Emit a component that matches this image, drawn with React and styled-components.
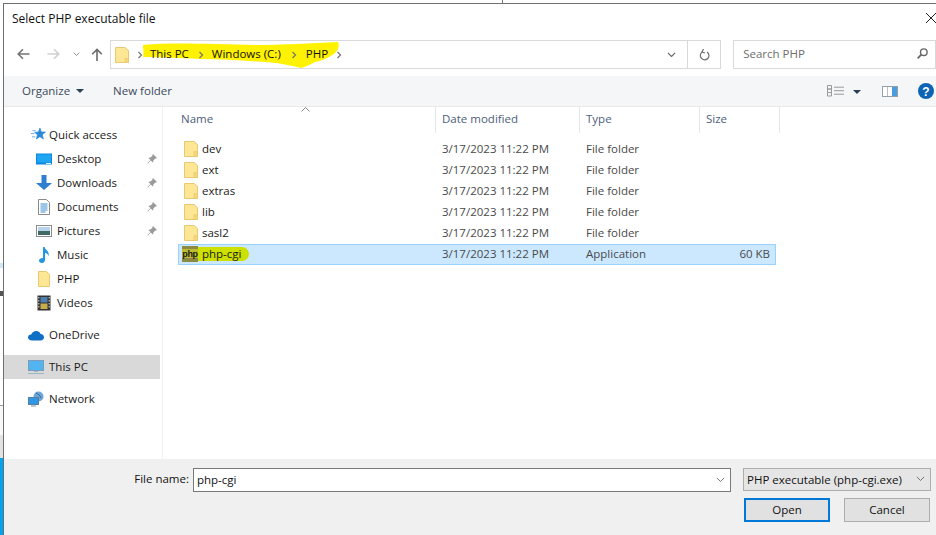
import React from "react";
import styled, { createGlobalStyle } from "styled-components";

const GlobalStyle = createGlobalStyle`
  html, body { margin: 0; padding: 0; background: #fff; }
  body { font-family: "Open Sans", "Noto Sans", sans-serif; font-size: 11.5px; color: #1a1a1a; }
  * { box-sizing: border-box; }
`;

const Page = styled.div`
  width: 936px;
  height: 535px;
  display: flex;
  position: relative;
  overflow: hidden;
  background: #fff;
`;

const OutsideStrip = styled.div`
  width: 3px;
  display: flex;
  flex-direction: column;
`;

const StripBand = styled.div`
  height: ${(p) => p.$h}px;
  flex: none;
  background: ${(p) => p.$c};
`;

const BehindTick = styled.div`
  position: absolute;
  left: 502px;
  top: 0;
  width: 1px;
  height: 3px;
  background: #777;
`;

const Dialog = styled.div`
  flex: 1;
  display: flex;
  flex-direction: column;
  margin-top: 3px;
  border-top: 1px solid #6f6f6f;
  border-left: 1px solid #6f6f6f;
  min-width: 0;
`;

const TitleBar = styled.div`
  height: 28px;
  display: flex;
  align-items: center;
  justify-content: space-between;
  padding: 0 0 0 8px;
  font-size: 12px;
  color: #111;
`;

const CloseIcon = styled.svg`
  width: 10px;
  height: 10px;
`;

const NavBar = styled.div`
  height: 44px;
  display: flex;
  align-items: flex-start;
  padding-top: 8px;
`;

const NavButtons = styled.div`
  width: 106px;
  height: 28px;
  display: flex;
  align-items: center;
  padding-left: 13px;
`;

const NavSlot = styled.span`
  display: inline-flex;
  align-items: center;
  margin-left: ${(p) => p.$ml || 0}px;
`;

const AddressBar = styled.div`
  width: 612px;
  height: 29px;
  display: flex;
  align-items: center;
  border: 1px solid #d9d9d9;
`;

const Crumbs = styled.div`
  flex: 1;
  display: flex;
  align-items: center;
  height: 100%;
  padding: 0 0 2px 4px;
  position: relative;
`;

const Highlight = styled.svg`
  position: absolute;
  left: 0;
  top: 0;
  pointer-events: none;
`;

const Crumb = styled.span`
  position: relative;
  color: #111;
  margin-left: ${(p) => p.$gap}px;
`;

const CrumbArrow = styled.svg`
  position: relative;
  width: 6px;
  height: 8px;
  margin-left: ${(p) => p.$gap}px;
  margin-top: 2px;
`;

const AddressButton = styled.div`
  width: ${(p) => p.$w}px;
  height: 100%;
  display: flex;
  align-items: center;
  justify-content: center;
  border-left: ${(p) => (p.$divided ? "1px solid #d9d9d9" : "none")};
`;

const SearchBox = styled.div`
  width: 203px;
  height: 29px;
  margin-left: 12px;
  display: flex;
  align-items: center;
  justify-content: space-between;
  padding: 0 7px 2px 9px;
  border: 1px solid #d9d9d9;
  color: #6d6d6d;
`;

const Toolbar = styled.div`
  height: 31px;
  display: flex;
  align-items: center;
  background: #f5f6f7;
  border-bottom: 1px solid #e9e9e9;
  padding: 0 0 2px 18px;
  color: #3b4a5c;
`;

const ToolButton = styled.span`
  display: inline-flex;
  align-items: center;
  gap: 6px;
  margin-right: ${(p) => p.$mr || 0}px;
`;

const Caret = styled.span`
  width: 0;
  height: 0;
  margin: ${(p) => p.$margin || "1px 0 0 0"};
  border-left: 4px solid transparent;
  border-right: 4px solid transparent;
  border-top: 4px solid #2c3e56;
`;

const ToolRight = styled.div`
  margin-left: auto;
  display: flex;
  align-items: center;
  padding: 2px 2px 0 0;
`;

const Body = styled.div`
  flex: 1;
  display: flex;
  min-height: 0;
`;

const Sidebar = styled.div`
  width: 159px;
  border-right: 1px solid #f1f1f1;
  padding-top: 16px;
`;

const NavRow = styled.div`
  height: 24px;
  width: 156px;
  display: flex;
  align-items: center;
  position: relative;
  padding-left: ${(p) => (p.$sub ? 32 : 24)}px;
  padding-bottom: 1px;
  margin-top: ${(p) => p.$mt || 0}px;
  background: ${(p) => (p.$active ? "#d9d9d9" : "transparent")};
`;

const NavIcon = styled.svg`
  width: 16px;
  height: 16px;
  flex: none;
  margin-right: 5px;
`;

const StarIcon = styled.svg`
  width: 15px;
  height: 15px;
  flex: none;
  margin: 0 3px 0 3px;
`;

const Pin = styled.svg`
  position: absolute;
  right: 3px;
  top: 7px;
  width: 10px;
  height: 10px;
`;

const FilePane = styled.div`
  flex: 1;
  padding-left: 15px;
  min-width: 0;
`;

const HeaderRow = styled.div`
  display: grid;
  grid-template-columns: 258px 144px 120px 80px;
  height: 26px;
  position: relative;
  color: #4c607a;
`;

const HeaderCell = styled.div`
  border-right: 1px solid #e5e5e5;
  padding: 0 0 3px ${(p) => (p.$first ? 3 : 6)}px;
  display: flex;
  align-items: center;
`;

const SortArrow = styled.svg`
  position: absolute;
  left: 123px;
  top: 0;
  width: 9px;
  height: 5px;
`;

const FileList = styled.div`
  padding-top: 6px;
`;

const FileRow = styled.div`
  display: grid;
  grid-template-columns: 258px 144px 120px 76px;
  width: 598px;
  height: 21px;
  align-items: center;
  position: relative;
  color: #4a4a4a;
  padding-bottom: 1px;
  background: ${(p) => (p.$selected ? "#cce8ff" : "transparent")};
  box-shadow: ${(p) => (p.$selected ? "inset 0 0 0 1px #99d1ff" : "none")};
`;

const NameCell = styled.div`
  display: flex;
  align-items: center;
  padding-left: 6px;
  gap: 4px;
  color: #1a1a1a;
  position: relative;
`;

const DataCell = styled.div`
  padding: 0 0 2px 6px;
`;

const SizeCell = styled.div`
  text-align: right;
  padding: 0 6px 2px 0;
`;

const RowHighlight = styled.div`
  position: absolute;
  left: 18px;
  top: 1px;
  width: 53px;
  height: 14px;
  background: #cde000;
  border-radius: 2px 7px 7px 2px;
`;

const PhpIcon = styled.div`
  position: relative;
  width: 16px;
  height: 16px;
  margin-left: -2px;
  background: linear-gradient(#8c8a45 0 3px, #bdbb2e 3px 12px, #8c8a45 12px);
  color: #1c1c1c;
  font-size: 9px;
  line-height: 17px;
  letter-spacing: -0.4px;
  text-align: center;
  font-family: "Liberation Sans", sans-serif;
  font-weight: 700;
`;

const FileLabel = styled.span`
  position: relative;
  padding-bottom: 2px;
`;

const Footer = styled.div`
  height: 76px;
  background: #f0f0f0;
  display: grid;
  grid-template-columns: 189px 538px 12px 188px;
  grid-template-rows: 24px 24px;
  row-gap: 6px;
  padding-top: 9px;
`;

const FieldLabel = styled.div`
  text-align: right;
  padding-right: 4px;
  line-height: 22px;
  color: #111;
`;

const FileInput = styled.div`
  background: #fff;
  border: 1px solid #7a7a7a;
  display: flex;
  align-items: center;
  justify-content: space-between;
  padding: 0 5px 1px 3px;
  color: #111;
`;

const Filter = styled.div`
  grid-column: 4;
  height: 23px;
  background: #e5e5e5;
  border: 1px solid #adadad;
  display: flex;
  align-items: center;
  justify-content: space-between;
  padding: 0 5px 1px 3px;
  color: #111;
  white-space: nowrap;
`;

const Buttons = styled.div`
  grid-column: 1 / -1;
  display: flex;
  justify-content: flex-end;
  gap: 14px;
  padding-right: 1px;
`;

const DialogButton = styled.div`
  width: 86px;
  height: 24px;
  display: flex;
  align-items: center;
  justify-content: center;
  padding-bottom: 1px;
  background: #e1e1e1;
  color: #111;
  border: ${(p) => (p.$primary ? "2px solid #0078d7" : "1px solid #adadad")};
`;

const Chevron = ({ size = 9, color = "#5a5a5a", sw = 1 }) => (
  <svg width={size} height={size * 0.6} viewBox="0 0 10 6" fill="none" stroke={color} strokeWidth={sw}>
    <path d="M1 1l4 4 4-4" />
  </svg>
);

const Arrow = ({ gap }) => (
  <CrumbArrow $gap={gap} viewBox="0 0 6 8" fill="none" stroke="#777" strokeWidth="1.3">
    <path d="M1.5 1l3 3-3 3" />
  </CrumbArrow>
);

const FolderIcon = () => (
  <svg width="14" height="16" viewBox="0 0 14 16" style={{ flex: "none" }}>
    <path d="M.5.5h9.5l3.5 3v12H.5z" fill="#fde694" stroke="#e8c873" />
    <path d="M10 10.5h3.5v5H10z" fill="#f5d679" stroke="#e8c873" strokeWidth=".6" />
  </svg>
);

const navIcons = {
  star: (
    <path d="M9.500 1l1.500 4.200 4.500.2-3.500 2.800 1.200 4.600-3.700-2.500-3.800 2.500 1.200-4.600-3-2.400L7.900 5.300zM0 7h3.500M1 10.500h3.500M1.500 4H5" fill="#2d89d8" stroke="#2d89d8" strokeWidth=".7" />
  ),
  desktop: (
    <>
      <rect x="0" y="2.500" width="16" height="11" fill="#0f87de" />
      <rect x="1" y="3.500" width="14" height="8" fill="#1fa6f2" />
      <path d="M10 12.500h5" stroke="#e8f4fc" />
    </>
  ),
  downloads: <path d="M5.500 0h5v8H16l-8 7-8-7h5.500z" fill="#2f7fd1" />,
  documents: (
    <>
      <path d="M2.500.5h8l3 3v12h-11z" fill="#fff" stroke="#8a8a8a" />
      <path d="M4.500 5h7M4.500 7h7M4.500 9h7M4.500 11h7M4.500 13h5" stroke="#3d8ccf" />
    </>
  ),
  pictures: (
    <>
      <rect x=".5" y="2.500" width="15" height="11" fill="#fff" stroke="#8c8c8c" />
      <rect x="2" y="4" width="12" height="4" fill="#b9d3ea" />
      <rect x="2" y="8" width="12" height="4" fill="#3f6b64" />
    </>
  ),
  music: (
    <path d="M7 0h1.600c.3 3 5.400 3.600 3.800 9.500C12.400 7.300 10.500 6 9 5.700V13c0 1.700-1.500 3-3.200 3S3 15 3 13.500 4.500 11 7 11z" fill="#2496e0" />
  ),
  videos: (
    <>
      <rect x="1.500" y="0.500" width="13" height="15" fill="#333" />
      <rect x="4.500" y="2" width="7" height="5.500" fill="#4f7fb0" />
      <rect x="4.500" y="8.500" width="7" height="5.500" fill="#c9ad4a" />
      <path d="M2.800 2v12M13.200 2v12" stroke="#ddd" strokeDasharray="1.500 1.500" />
    </>
  ),
  cloud: (
    <path d="M4 13.500C1.500 13.500 0 12 0 10.500 0 8.800 1.400 7.500 3.200 7.600 4 5.200 6 4 8.300 4c2 0 3.600 1 4.300 3 2 0 3.400 1.400 3.400 3.200 0 1.900-1.400 3.300-3.300 3.300z" fill="#0f6fc4" />
  ),
  monitor: (
    <>
      <rect x=".5" y="1.500" width="15" height="10" fill="#53b4f2" stroke="#7b9db8" />
      <path d="M6 12.500h4" stroke="#9db4c6" />
      <path d="M0 14.500h16" stroke="#9db4c6" />
    </>
  ),
  network: (
    <>
      <circle cx="10.500" cy="5.500" r="5" fill="#6fa6d6" />
      <path d="M8 2c2 1 4 2 5 5" stroke="#2c6aa6" fill="none" />
      <rect x=".5" y="6.500" width="10" height="7" fill="#2f97e6" stroke="#5a7d9a" />
      <path d="M3 15h5" stroke="#7d97ab" />
    </>
  ),
  folder: <path d="M2.500.5h8l3 3v12h-11z" fill="#fde694" stroke="#e8c873" />,
};

const stripBands = [
  [263, "#fff"],
  [5, "#cfe8f5"],
  [23, "#fff"],
  [5, "#555"],
  [109, "#fff"],
  [1, "#9a9a9a"],
  [29, "#f8f8f8"],
  [23, "#e2e2e2"],
  [77, "#00a3ee"],
];

const quickLinks = [
  { label: "Desktop", icon: "desktop", pinned: true },
  { label: "Downloads", icon: "downloads", pinned: true },
  { label: "Documents", icon: "documents", pinned: true },
  { label: "Pictures", icon: "pictures", pinned: true },
  { label: "Music", icon: "music" },
  { label: "PHP", icon: "folder" },
  { label: "Videos", icon: "videos" },
];

const folders = ["dev", "ext", "extras", "lib", "sasl2"];

const PinIcon = () => (
  <Pin viewBox="0 0 10 10">
    <path d="M6 0l4 4-1 .6-.6-.2L6.300 6.500c.2.800 0 1.500-.6 2L3.800 6.400 1 9.400l-.5-.5 3-2.800L1.500 4.200c.5-.6 1.200-.8 2-.6l2.100-2.100-.2-.6z" fill="#9a9a9a" />
  </Pin>
);

export default function App() {
  return (
    <Page>
      <GlobalStyle />
      <BehindTick />
      <OutsideStrip>
        {stripBands.map(([h, c], i) => (
          <StripBand key={i} $h={h} $c={c} />
        ))}
      </OutsideStrip>
      <Dialog>
        <TitleBar>
          Select PHP executable file
          <CloseIcon viewBox="0 0 10 10" stroke="#222" strokeWidth="1" fill="none">
            <path d="M0 0l10 10M10 0L0 10" />
          </CloseIcon>
        </TitleBar>

        <NavBar>
          <NavButtons>
            <NavSlot>
              <svg width="13" height="12" viewBox="0 0 13 12" fill="none" stroke="#757575" strokeWidth="1.6">
                <path d="M12.500 6H1.500M6 1.200L1.200 6 6 10.800" />
              </svg>
            </NavSlot>
            <NavSlot $ml={17}>
              <svg width="13" height="12" viewBox="0 0 13 12" fill="none" stroke="#cfcfcf" strokeWidth="1.6">
                <path d="M.5 6h11M7 1.200L11.800 6 7 10.800" />
              </svg>
            </NavSlot>
            <NavSlot $ml={13}>
              <Chevron size={7} color="#8f8f8f" sw={1.4} />
            </NavSlot>
            <NavSlot $ml={11}>
              <svg width="12" height="13" viewBox="0 0 12 13" fill="none" stroke="#6b6b6b" strokeWidth="1.6">
                <path d="M6 13V1.500M1.200 6.200L6 1.400l4.800 4.800" />
              </svg>
            </NavSlot>
          </NavButtons>
          <AddressBar>
            <Crumbs>
              <Highlight width="240" height="29">
                <path d="M32 4C60 1 100 3 145 4 170 4 200 2 227 1c2 4 0 9-4 12-6 4-13 7-19 8-5 3-10 5-14 6-8-2-16-4-25-5-25-2-50-4-75-4-20-1-40-2-58-2 1-4 0-8 0-12z" fill="#fff200" />
              </Highlight>
              <svg width="14" height="16" viewBox="0 0 14 16" style={{ position: "relative", marginTop: 2 }}>
                <path d="M.5.5h9.500l3.500 3v12H.5z" fill="#fde694" stroke="#e8c873" />
                <path d="M10 11.500h3.500v4H10z" fill="#f5d679" stroke="#e8c873" strokeWidth=".6" />
              </svg>
              <Arrow gap={8} />
              <Crumb $gap={7}>This PC</Crumb>
              <Arrow gap={9} />
              <Crumb $gap={8}>Windows (C:)</Crumb>
              <Arrow gap={10} />
              <Crumb $gap={9}>PHP</Crumb>
              <Arrow gap={8} />
            </Crumbs>
            <AddressButton $w={32}>
              <Chevron size={9} color="#6d6d6d" sw={1.4} />
            </AddressButton>
            <AddressButton $w={33} $divided>
              <svg width="11" height="12" viewBox="0 0 11 12" fill="none" stroke="#707070" strokeWidth="1.2">
                <path d="M3.500 2.800a4.300 4.300 0 1 0 4.600.2" />
                <path d="M3 0l1.500 3L1.500 4" transform="translate(3.500 0) scale(-1 1) translate(-4 0)" />
              </svg>
            </AddressButton>
          </AddressBar>
          <SearchBox>
            Search PHP
            <svg width="11" height="11" viewBox="0 0 11 11" fill="none" stroke="#666" strokeWidth="1.4">
              <circle cx="6.800" cy="4.200" r="3.300" />
              <path d="M4.300 6.700L.7 10.300" strokeWidth="1.800" />
            </svg>
          </SearchBox>
        </NavBar>

        <Toolbar>
          <ToolButton $mr={29}>
            Organize
            <Caret />
          </ToolButton>
          <ToolButton>New folder</ToolButton>
          <ToolRight>
            <svg width="17" height="12" viewBox="0 0 17 12" fill="none" stroke="#9a9a9a">
              <path d="M.5.500h4v3.500h-4zM.5 4h4v3.500h-4zM.5 7.500h4V11h-4zM7 2.200h10M7 5.700h10M7 9.200h10" />
            </svg>
            <Caret $margin="1px 21px 0 9px" />
            <svg width="16" height="11" viewBox="0 0 16 11" style={{ marginRight: 20 }}>
              <rect x=".5" y=".5" width="15" height="10" fill="#fff" stroke="#93a0ab" />
              <rect x="5" y="1" width="1" height="9" fill="#b5bec6" />
              <rect x="10" y="1" width="5" height="9" fill="#4a9be0" />
            </svg>
            <svg width="16" height="16" viewBox="0 0 16 16">
              <circle cx="8" cy="8" r="8" fill="#0e63b5" />
              <text x="8" y="12.500" textAnchor="middle" fontSize="12" fontWeight="700" fill="#fff" fontFamily="Liberation Sans, sans-serif">?</text>
            </svg>
          </ToolRight>
        </Toolbar>

        <Body>
          <Sidebar>
            <NavRow>
              <StarIcon viewBox="0 0 16 16">{navIcons.star}</StarIcon>
              Quick access
            </NavRow>
            {quickLinks.map((link) => (
              <NavRow key={link.label} $sub>
                <NavIcon viewBox="0 0 16 16">{navIcons[link.icon]}</NavIcon>
                {link.label}
                {link.pinned && <PinIcon />}
              </NavRow>
            ))}
            <NavRow $mt={8}>
              <NavIcon viewBox="0 0 16 16">{navIcons.cloud}</NavIcon>
              OneDrive
            </NavRow>
            <NavRow $mt={8} $active>
              <NavIcon viewBox="0 0 16 16">{navIcons.monitor}</NavIcon>
              This PC
            </NavRow>
            <NavRow $mt={8}>
              <NavIcon viewBox="0 0 16 16">{navIcons.network}</NavIcon>
              Network
            </NavRow>
          </Sidebar>

          <FilePane>
            <HeaderRow>
              <SortArrow viewBox="0 0 9 5" fill="none" stroke="#8a8a8a">
                <path d="M.5 4.500l4-4 4 4" />
              </SortArrow>
              <HeaderCell $first>Name</HeaderCell>
              <HeaderCell>Date modified</HeaderCell>
              <HeaderCell>Type</HeaderCell>
              <HeaderCell>Size</HeaderCell>
            </HeaderRow>
            <FileList>
              {folders.map((name) => (
                <FileRow key={name}>
                  <NameCell>
                    <FolderIcon />
                    <FileLabel>{name}</FileLabel>
                  </NameCell>
                  <DataCell>3/17/2023 11:22 PM</DataCell>
                  <DataCell>File folder</DataCell>
                  <div />
                </FileRow>
              ))}
              <FileRow $selected>
                <NameCell>
                  <RowHighlight />
                  <PhpIcon>php</PhpIcon>
                  <FileLabel>php-cgi</FileLabel>
                </NameCell>
                <DataCell>3/17/2023 11:22 PM</DataCell>
                <DataCell>Application</DataCell>
                <SizeCell>60 KB</SizeCell>
              </FileRow>
            </FileList>
          </FilePane>
        </Body>

        <Footer>
          <FieldLabel>File name:</FieldLabel>
          <FileInput>
            php-cgi
            <Chevron size={9} color="#666" />
          </FileInput>
          <span />
          <Filter>
            PHP executable (php-cgi.exe)
            <Chevron size={9} color="#666" />
          </Filter>
          <Buttons>
            <DialogButton $primary>Open</DialogButton>
            <DialogButton>Cancel</DialogButton>
          </Buttons>
        </Footer>
      </Dialog>
    </Page>
  );
}
